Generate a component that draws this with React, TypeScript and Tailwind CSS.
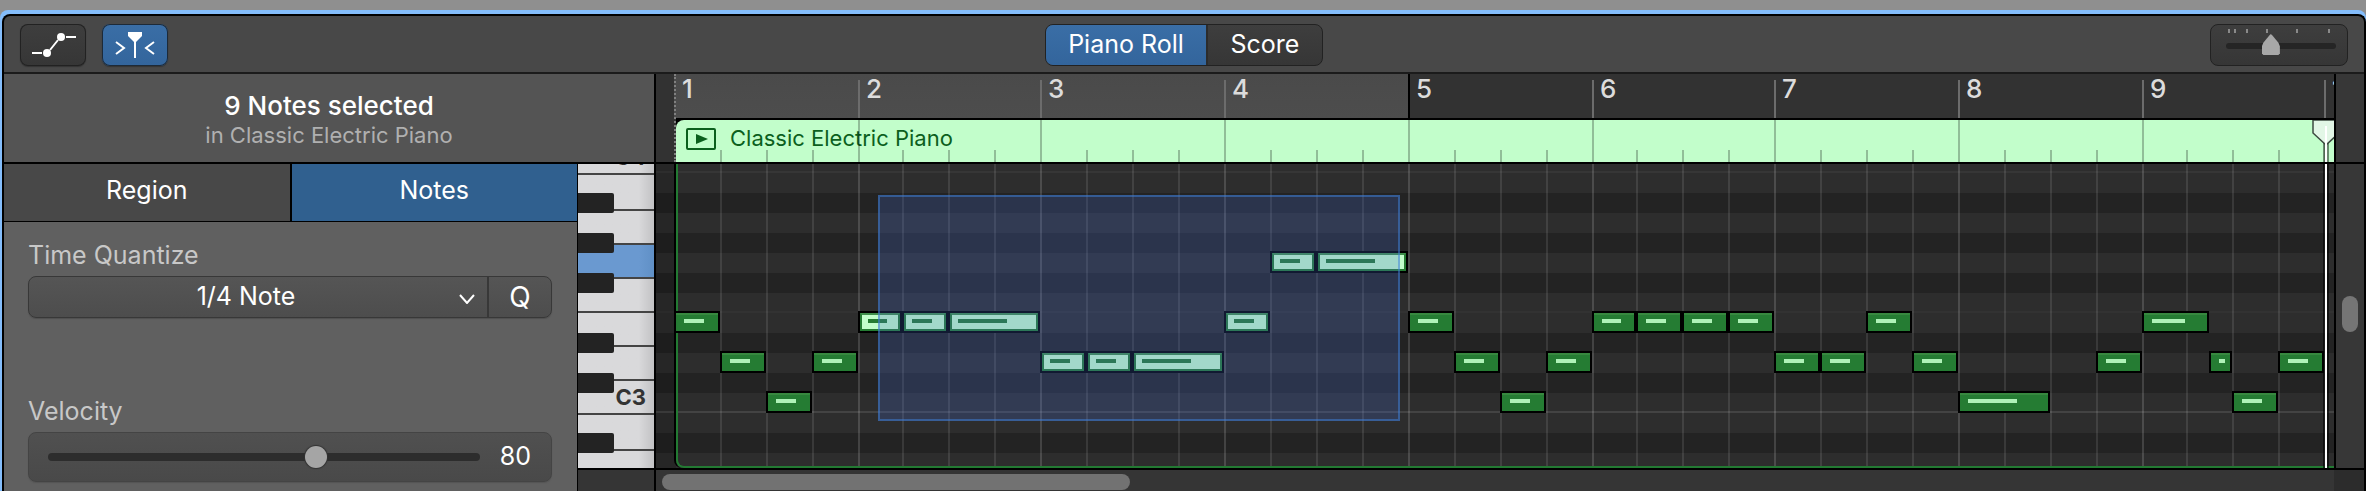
import { useState } from 'react';
import clsx from 'clsx';

interface Note {
  beat: number;
  length: number;
  pitch: string;
  selected?: boolean;
}

// Top to bottom, the way the roll lists its rows.
const ROWS = ['C4', 'B3', 'A#3', 'A3', 'G#3', 'G3', 'F#3', 'F3', 'E3', 'D#3', 'D3', 'C#3', 'C3', 'B2', 'A#2', 'A2'];

const NOTES: Note[] = [
  { beat: 0, length: 1, pitch: 'E3' },
  { beat: 1, length: 1, pitch: 'D3' },
  { beat: 2, length: 1, pitch: 'C3' },
  { beat: 3, length: 1, pitch: 'D3' },
  { beat: 4, length: 1, pitch: 'E3', selected: true },
  { beat: 5, length: 1, pitch: 'E3', selected: true },
  { beat: 6, length: 2, pitch: 'E3', selected: true },
  { beat: 8, length: 1, pitch: 'D3', selected: true },
  { beat: 9, length: 1, pitch: 'D3', selected: true },
  { beat: 10, length: 2, pitch: 'D3', selected: true },
  { beat: 12, length: 1, pitch: 'E3', selected: true },
  { beat: 13, length: 1, pitch: 'G3', selected: true },
  { beat: 14, length: 2, pitch: 'G3', selected: true },
  { beat: 16, length: 1, pitch: 'E3' },
  { beat: 17, length: 1, pitch: 'D3' },
  { beat: 18, length: 1, pitch: 'C3' },
  { beat: 19, length: 1, pitch: 'D3' },
  { beat: 20, length: 1, pitch: 'E3' },
  { beat: 21, length: 1, pitch: 'E3' },
  { beat: 22, length: 1, pitch: 'E3' },
  { beat: 23, length: 1, pitch: 'E3' },
  { beat: 24, length: 1, pitch: 'D3' },
  { beat: 25, length: 1, pitch: 'D3' },
  { beat: 26, length: 1, pitch: 'E3' },
  { beat: 27, length: 1, pitch: 'D3' },
  { beat: 28, length: 2, pitch: 'C3' },
  { beat: 31, length: 1, pitch: 'D3' },
  { beat: 32, length: 1.5, pitch: 'E3' },
  { beat: 33.5, length: 0.5, pitch: 'D3' },
  { beat: 34, length: 1, pitch: 'C3' },
  { beat: 35, length: 1, pitch: 'D3' },
];

const WHITE_KEYS = [
  { name: 'C4', height: 34 },
  { name: 'B3', height: 36 },
  { name: 'A3', height: 34 },
  { name: 'G3', height: 34 },
  { name: 'F3', height: 34 },
  { name: 'E3', height: 34 },
  { name: 'D3', height: 34 },
  { name: 'C3', height: 34 },
  { name: 'B2', height: 36 },
  { name: 'A2', height: 34 },
];

const ROW_HEIGHT = 20;
// The roll is scrolled so that only the lower part of C4 shows.
const SCROLL_TOP = 11;
const BEATS = Array.from({ length: 37 }, (_, i) => i);

// Left edge of each bar in the timeline. Beats are 46px apart; any rounding
// slack in a bar goes into its first beat.
const BAR_X = [18, 202, 384, 568, 752, 936, 1118, 1302, 1486, 1668];
const BEAT_WIDTH = 46;

function beatX(beat: number) {
  const bar = Math.floor(beat / 4);
  const offset = beat - bar * 4;
  if (offset === 0) return BAR_X[bar];
  return BAR_X[bar + 1] - (4 - offset) * BEAT_WIDTH;
}

const rowY = (pitch: string) => ROWS.indexOf(pitch) * ROW_HEIGHT - SCROLL_TOP;

function AutomationIcon() {
  return (
    <svg width="66" height="42" viewBox="0 0 66 42" fill="none" stroke="white" strokeWidth="2" aria-hidden>
      <path d="M12 29H22M30 26L38 16M46 13H56" />
      <circle cx="27" cy="29" r="4" fill="white" stroke="none" />
      <circle cx="41" cy="13" r="4" fill="white" stroke="none" />
    </svg>
  );
}

function CatchIcon() {
  return (
    <svg width="66" height="42" viewBox="0 0 66 42" fill="none" stroke="white" strokeWidth="2" aria-hidden>
      <path d="M26 8H40V12L34 18H32L26 12Z" fill="white" stroke="none" />
      <path d="M33 16V34" />
      <path d="M14 18L22 24L14 30M52 18L44 24L52 30" />
    </svg>
  );
}

function Toolbar() {
  const [zoom, setZoom] = useState(39);
  return (
    <div className="grid grid-cols-[1fr_auto_1fr] items-start border-b-2 border-[#1b1b1b] bg-[#484848] px-4 pt-2 pb-1.5">
      <div className="flex gap-4">
        <button
          aria-label="Show automation"
          className="flex h-[42px] w-[66px] items-center justify-center rounded-lg bg-linear-to-b from-[#3e3e3e] to-[#363636] shadow-[inset_0_0_0_1px_#222,0_1px_1px_#333]"
        >
          <AutomationIcon />
        </button>
        <button
          aria-label="Catch playhead"
          aria-pressed
          className="flex h-[42px] w-[66px] items-center justify-center rounded-lg bg-linear-to-b from-[#3a6ea6] to-[#33659c] shadow-[inset_0_0_0_1px_#1d2a38,0_1px_1px_#333]"
        >
          <CatchIcon />
        </button>
      </div>
      <div className="flex h-[42px] overflow-hidden rounded-lg border border-[#222] bg-linear-to-b from-[#3e3e3e] to-[#363636] text-[25px]">
        <button aria-pressed className="w-[162px] border-r-2 border-[#2c2c2c] bg-linear-to-b from-[#3a6ea6] to-[#33659c]">
          Piano Roll
        </button>
        <button className="w-[114px]">Score</button>
      </div>
      <div className="flex justify-end">
        <div className="flex h-[42px] w-[138px] flex-col items-center rounded-lg border border-[#222] bg-linear-to-b from-[#3e3e3e] to-[#363636] pt-1 pl-1">
          <svg width="110" height="4" viewBox="0 0 110 4" fill="#8a8a8a" aria-hidden>
            <path d="M2 0h2v4h-2zM8 0h2v4h-2zM20 0h2v4h-2zM40 0h2v4h-2zM70 0h2v4h-2zM102 0h2v4h-2z" />
          </svg>
          <input
            type="range"
            aria-label="Horizontal zoom"
            value={zoom}
            onChange={(e) => setZoom(Number(e.target.value))}
            className="h-[26px] w-[110px] appearance-none bg-transparent [&::-webkit-slider-runnable-track]:h-1.5 [&::-webkit-slider-runnable-track]:rounded-full [&::-webkit-slider-runnable-track]:bg-[#252525] [&::-webkit-slider-thumb]:-mt-[9px] [&::-webkit-slider-thumb]:h-[21px] [&::-webkit-slider-thumb]:w-[18px] [&::-webkit-slider-thumb]:appearance-none [&::-webkit-slider-thumb]:bg-[#a8a8a8] [&::-webkit-slider-thumb]:[clip-path:polygon(50%_0,60%_8%,92%_42%,100%_58%,100%_92%,92%_100%,8%_100%,0_92%,0_58%,8%_42%,40%_8%)]"
          />
        </div>
      </div>
    </div>
  );
}

function Ruler() {
  return (
    <div className="relative h-22 min-w-0 flex-1 overflow-hidden bg-[#323232]">
      {/* cycle range, bars 1 to 5 */}
      <div
        className="absolute top-0 h-11 bg-linear-to-b from-[#4a4a4a] to-[#4d4d4d]"
        style={{ left: beatX(0), width: beatX(16) - beatX(0) }}
      />
      <div className="absolute top-11 right-0 left-5 h-11 border-t-2 border-black bg-black">
        <div className="flex h-full items-start rounded-tl-lg bg-[#c2fecb] pt-2 pl-2.5 text-[#0b5f1d]">
          <svg width="30" height="22" viewBox="0 0 30 22" fill="none" aria-hidden>
            <rect x="1" y="1" width="28" height="20" rx="1" stroke="currentColor" strokeWidth="2" />
            <path d="M10 6L22 11L10 16Z" fill="currentColor" />
          </svg>
          <span className="ml-3.5 text-[22px] leading-5 whitespace-nowrap">Classic Electric Piano</span>
        </div>
      </div>
      {BEATS.slice(1).map((beat) => (
        <div
          key={beat}
          className={clsx('absolute bottom-0 w-0.5 bg-black/25', beat % 4 === 0 ? 'h-[42px]' : 'h-3')}
          style={{ left: beatX(beat) }}
        />
      ))}
      {BEATS.filter((beat) => beat % 4 === 0).map((beat) => (
        <div key={beat} className="absolute top-0 flex h-11 items-end" style={{ left: beatX(beat) }}>
          <div
            className={clsx(
              'w-0.5',
              beat === 0 && 'h-0',
              beat === 16 && 'h-11 bg-black',
              beat !== 0 && beat !== 16 && 'h-[38px] bg-[#6c6c6c]',
            )}
          />
          <span className="self-start pt-0.5 pl-1.5 text-[26px] leading-[26px] font-medium text-[#dcdcdc]">
            {beat / 4 + 1}
          </span>
        </div>
      ))}
      <div className="absolute top-0 h-22 border-l-2 border-dotted border-[#808080]" style={{ left: beatX(0) }} />
      {/* playhead marker */}
      <svg
        className="absolute top-[46px] h-[42px] w-[30px]"
        style={{ left: beatX(36) - 13 }}
        viewBox="0 0 30 42"
        aria-hidden
      >
        <path d="M12 6h6v36h-6z" fill="#000" fillOpacity="0.45" />
        <path d="M2 0V13L15 25L28 13V0Z" fill="#e2f6e6" stroke="#3d4a40" strokeWidth="1.5" />
        <path d="M14 6h2v36h-2z" fill="#fff" />
      </svg>
    </div>
  );
}

function Inspector() {
  const [velocity, setVelocity] = useState(80);
  return (
    <div className="w-[574px] shrink-0 border-r border-black bg-[#606060]">
      <div className="flex h-[58px] border-b border-black text-[25px]">
        <button className="flex-1 border-r-2 border-black bg-[#484848] pb-1">Region</button>
        <button aria-pressed className="flex-1 bg-[#30608f] pb-1">
          Notes
        </button>
      </div>
      <div className="pt-[18px] pr-[25px] pl-6 text-[25px]">
        <label htmlFor="quantize" className="block leading-[30px] text-[#c8c8c8]">
          Time Quantize
        </label>
        <div className="relative mt-1.5 flex h-[42px] overflow-hidden rounded-lg border border-[#383838] bg-linear-to-b from-[#555] to-[#4d4d4d] shadow-[0_1px_1px_#505050]">
          <select
            id="quantize"
            className="min-w-0 flex-1 appearance-none pr-6 outline-none [text-align-last:center]"
            defaultValue="1/4 Note"
          >
            <option>1/4 Note</option>
          </select>
          <svg
            className="pointer-events-none absolute top-[17px] right-[76px]"
            width="16"
            height="10"
            viewBox="0 0 16 10"
            fill="none"
            stroke="white"
            strokeWidth="2"
            aria-hidden
          >
            <path d="M1 1L8 9L15 1" />
          </svg>
          <button aria-label="Quantize" className="w-16 border-l-2 border-[#383838] text-[28px] leading-[34px]">
            Q
          </button>
        </div>
        <label htmlFor="velocity" className="mt-[78px] block leading-[30px] text-[#c8c8c8]">
          Velocity
        </label>
        <div className="mt-1.5 flex h-[50px] items-center justify-between rounded-lg border border-[#444] bg-linear-to-b from-[#505050] to-[#494949] pr-5 pl-[19px] shadow-[0_1px_1px_#555]">
          <input
            id="velocity"
            type="range"
            min={1}
            max={127}
            value={velocity}
            onChange={(e) => setVelocity(Number(e.target.value))}
            className="h-6 w-[432px] appearance-none bg-transparent [&::-webkit-slider-runnable-track]:h-2 [&::-webkit-slider-runnable-track]:rounded-full [&::-webkit-slider-runnable-track]:bg-[#2d2d2d] [&::-webkit-slider-thumb]:-mt-[7px] [&::-webkit-slider-thumb]:size-[22px] [&::-webkit-slider-thumb]:appearance-none [&::-webkit-slider-thumb]:rounded-full [&::-webkit-slider-thumb]:bg-[#a5a5a5] [&::-webkit-slider-thumb]:shadow-[0_0_1px_1px_#333]"
          />
          <output htmlFor="velocity">{velocity}</output>
        </div>
      </div>
    </div>
  );
}

function Keyboard() {
  return (
    <div className="relative h-76 overflow-hidden bg-[#d9d9db]">
      <div className="-mt-[23px]">
        {WHITE_KEYS.map((key) => (
          <div
            key={key.name}
            className={clsx(
              'flex items-center justify-end border-b-2 border-[#444] pr-2 text-[22px] font-bold text-[#333]',
              key.name === 'G3'
                ? 'bg-linear-to-r from-[#6a99d0] from-80% to-[#6090c6]'
                : 'bg-linear-to-r from-[#d9d9db] from-80% to-[#c2c2c4]',
            )}
            style={{ height: key.height }}
          >
            {key.name.startsWith('C') && key.name}
          </div>
        ))}
      </div>
      {ROWS.filter((row) => row.includes('#')).map((row) => (
        <div
          key={row}
          className="absolute left-0 h-5 w-9 rounded-r-xs bg-[#232323]"
          style={{ top: rowY(row) }}
        />
      ))}
    </div>
  );
}

function NoteBlock({ note, velocity }: { note: Note; velocity: number }) {
  const left = beatX(note.beat);
  const width = beatX(note.beat + note.length) - left;
  return (
    <div
      className="absolute h-[22px] border-2 border-black bg-black"
      style={{ left, width, top: rowY(note.pitch) - 2 }}
    >
      <div
        className={clsx(
          'h-full',
          note.selected
            ? 'border-2 border-[#257c33] border-t-[#3f8f4b] bg-[#c2fecb] pt-1 pl-1.5'
            : 'border-t-2 border-t-[#37883f] bg-[#257c33] pt-1 pl-2',
        )}
      >
        <div
          className={clsx('h-1', note.selected ? 'bg-[#257c33]' : 'bg-[#aff2b8]')}
          style={{ width: Math.round(((width - 14) * velocity) / 127) }}
        />
      </div>
    </div>
  );
}

function PianoRoll() {
  return (
    <div className="relative h-76 overflow-hidden bg-[#2d2d2d]">
      <div className="-mt-[11px]">
        {ROWS.map((row) => (
          <div
            key={row}
            className={clsx(
              'h-5',
              row.includes('#') ? 'bg-[#232323]' : 'bg-[#2d2d2d]',
              row === 'C4' && 'border-b-2 border-[#363636]',
              row === 'F3' && 'border-b-2 border-[#323232]',
              row === 'C3' && 'border-b-2 border-[#434343]',
            )}
          />
        ))}
      </div>
      {BEATS.slice(1).map((beat) => (
        <div
          key={beat}
          className={clsx('absolute top-0 h-full w-0.5', beat % 4 === 0 ? 'bg-white/15' : 'bg-white/10')}
          style={{ left: beatX(beat) }}
        />
      ))}
      <div className="absolute top-0 left-0 h-full w-5 bg-black/15" />
      <div className="absolute top-0 right-0 bottom-0 left-[18px] overflow-hidden">
        <div className="h-full rounded-bl-lg border-l-2 border-black">
          <div className="h-full rounded-bl-lg border-b-2 border-l-2 border-[#237a33]" />
        </div>
      </div>
      {NOTES.map((note) => (
        <NoteBlock key={note.beat} note={note} velocity={80} />
      ))}
      {/* rubber band selection */}
      <div className="absolute top-[31px] left-[222px] h-[226px] w-[522px] border-2 border-[#3e82dc]/50 bg-[#4367c8]/25" />
      {/* playhead */}
      <div
        className="absolute top-0 h-full w-1.5 border-x-2 border-black/60 bg-white bg-clip-padding"
        style={{ left: beatX(36) - 1 }}
      />
    </div>
  );
}

export default function App() {
  return (
    <div className="flex min-h-screen flex-col bg-[#8f8f8f] pt-2.5 font-['Inter','Liberation_Sans',sans-serif] text-white">
      <div className="flex flex-1 flex-col rounded-t-lg border-t-4 border-l-2 border-[#84bdfb] bg-[#84bdfb]">
        <div className="flex flex-1 flex-col overflow-hidden rounded-t-lg border-x-2 border-t-2 border-black bg-black">
          <Toolbar />
          <div className="flex border-b-2 border-black">
            <div className="flex h-22 w-[652px] shrink-0 flex-col items-center justify-center border-r-2 border-black bg-[#545454] pt-1">
              <h1 className="text-[26px] leading-[30px] font-medium">9 Notes selected</h1>
              <p className="text-[22px] leading-7 text-[#b0b0b0]">in Classic Electric Piano</p>
            </div>
            <Ruler />
            <div className="w-[30px] shrink-0 border-l-2 border-black bg-[#373737]" />
          </div>
          <div className="flex flex-1">
            <Inspector />
            <div className="flex w-[78px] shrink-0 flex-col border-r-2 border-black">
              <Keyboard />
              <div className="flex-1 border-t-2 border-black bg-[#353535]" />
            </div>
            <div className="flex min-w-0 flex-1 flex-col">
              <PianoRoll />
              <div className="flex-1 border-t-2 border-black bg-[#353535] pt-1 pl-1.5">
                <div className="h-4 w-[468px] rounded-full bg-[#727272]" />
              </div>
            </div>
            <div className="flex w-[30px] shrink-0 flex-col">
              <div className="h-76 border-l-2 border-black bg-[#373737] pt-[132px] pl-1.5">
                <div className="h-9 w-4 rounded-full bg-[#757575]" />
              </div>
              <div className="mt-0.5 flex-1 bg-[#2c2c2c]" />
            </div>
          </div>
        </div>
      </div>
    </div>
  );
}
